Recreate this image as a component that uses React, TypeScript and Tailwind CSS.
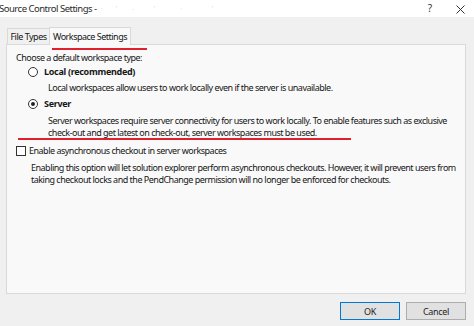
import React from "react";

const font = { fontFamily: '"Noto Sans", "Open Sans", sans-serif' };

export default function App() {
  return (
    <div
      className="w-[474px] h-[326px] bg-[#f0f0f0] flex flex-col overflow-hidden text-[#161616] text-[9px] leading-[11px]"
      style={font}
    >
      {/* title bar */}
      <div className="h-[17px] bg-white flex items-center justify-between shrink-0">
        <div className="flex items-center -ml-[1px] text-[9.5px] text-[#2b2b2b] tracking-[-0.5px] whitespace-nowrap">
          <span>Source Control Settings - </span>
          <span className="text-[#aaa] ml-[4px] text-[6px]">·</span>
          <span className="text-[#ccc] ml-[14px] text-[6px]">'</span>
          <span className="text-[#ccc] ml-[16px] text-[6px]">.</span>
          <span className="text-[#ccc] ml-[20px] text-[6px]">'</span>
          <span className="text-[#ccc] ml-[26px] text-[6px]">·</span>
          <span className="text-[#ccc] ml-[30px] text-[6px]">'</span>
        </div>
        <div className="flex items-center gap-[24px] pr-[9px] text-[#333]">
          <span className="text-[10px]">?</span>
          <svg width="9" height="9" viewBox="0 0 9 9" className="mt-[1px]">
            <path d="M0.5 0.5 L8.5 8.5 M8.5 0.5 L0.5 8.5" stroke="#333" strokeWidth="1" />
          </svg>
        </div>
      </div>

      {/* tab strip */}
      <div className="flex items-end pl-[7px] mt-[9px] h-[18px] shrink-0 relative z-10 tracking-[-0.5px] whitespace-nowrap">
        <div className="h-[16px] w-[42px] flex items-center justify-center border border-b-0 border-r-0 border-[#d9d9d9] bg-[#f0f0f0]">
          File Types
        </div>
        <div className="h-[18px] w-[82px] flex items-center justify-center border border-b-0 border-[#d9d9d9] bg-[#f9f9f9] -mb-[1px] relative">
          Workspace Settings
          <div className="absolute left-[2px] w-[95px] top-[20px] h-[2px] bg-[#e0202c]" />
        </div>
      </div>

      {/* panel */}
      <div className="ml-[6px] w-[460px] h-[250px] border border-[#d9d9d9] bg-[#f9f9f9] shrink-0 pl-[9px] pt-[7px] relative whitespace-nowrap tracking-[-0.5px]">
        <div>Choose a default workspace type:</div>

        <div className="flex items-center mt-[3px] ml-[12px] gap-[6px]">
          <div className="w-[10px] h-[10px] rounded-full border border-[#333] bg-white" />
          <span className="font-bold tracking-[-0.3px]">Local (recommended)</span>
        </div>
        <div className="ml-[32px] mt-[5px]">
          Local workspaces allow users to work locally even if the server is unavailable.
        </div>

        <div className="flex items-center mt-[5px] ml-[12px] gap-[6px]">
          <div className="w-[10px] h-[10px] rounded-full border border-[#333] bg-white flex items-center justify-center">
            <div className="w-[4px] h-[4px] rounded-full bg-[#222]" />
          </div>
          <span className="font-bold tracking-[-0.3px]">Server</span>
        </div>
        <div className="ml-[32px] mt-[6px] leading-[11.5px]">
          <div>
            Server workspaces require server connectivity for users to work locally. To enable features such as exclusive
          </div>
          <div>check-out and get latest on check-out, server workspaces must be used.</div>
        </div>
        <div className="ml-[2px] mt-[0px] w-[333px] h-[2px] bg-[#e0202c]" />

        <div className="flex items-center mt-[5px] ml-[0px] gap-[3px]">
          <div className="w-[10px] h-[10px] border border-[#333] bg-white" />
          <span>Enable asynchronous checkout in server workspaces</span>
        </div>
        <div className="ml-[15px] mt-[6px] leading-[12px]">
          <div>
            Enabling this option will let solution explorer perform asynchronous checkouts. However, it will prevent users from
          </div>
          <div>taking checkout locks and the PendChange permission will no longer be enforced for checkouts.</div>
        </div>
      </div>

      {/* buttons */}
      <div className="flex justify-end gap-[6px] pr-[8px] mt-[8px] tracking-[-0.3px]">
        <button className="w-[60px] h-[18px] border border-[#0078d7] bg-[#e1e1e1] text-[9px] text-[#1e1e1e] flex items-center justify-center">
          OK
        </button>
        <button className="w-[60px] h-[18px] border border-[#adadad] bg-[#e1e1e1] text-[9px] text-[#1e1e1e] flex items-center justify-center">
          Cancel
        </button>
      </div>
    </div>
  );
}
